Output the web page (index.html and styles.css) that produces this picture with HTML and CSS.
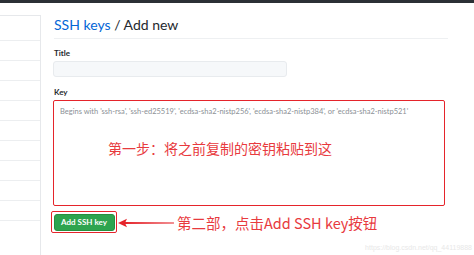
FILE: index.html
```html
<!DOCTYPE html>
<html lang="zh-CN">
<head>
<meta charset="utf-8">
<title>SSH keys / Add new</title>
<link rel="stylesheet" href="styles.css">
</head>
<body>
<div class="topbar"></div>
<div class="main">
  <nav class="sidebar">
    <div class="side-row side-first"></div>
    <div class="side-row"></div>
    <div class="side-row"></div>
    <div class="side-row"></div>
    <div class="side-row"></div>
    <div class="side-row"></div>
    <div class="side-row"></div>
    <div class="side-row"></div>
    <div class="side-row"></div>
    <div class="side-row"></div>
  </nav>
  <div class="content">
    <h1 class="heading"><a class="crumb" href="#">SSH keys</a> / Add new</h1>
    <form class="form">
      <label class="label" for="title">Title</label>
      <input class="input" id="title" type="text">
      <label class="label label-key" for="key">Key</label>
      <div class="key-wrap">
        <textarea class="textarea" id="key" placeholder="Begins with 'ssh-rsa', 'ssh-ed25519', 'ecdsa-sha2-nistp256', 'ecdsa-sha2-nistp384', or 'ecdsa-sha2-nistp521'"></textarea>
        <span class="note note-step1">第一步：将之前复制的密钥粘贴到这</span>
      </div>
      <div class="actions">
        <div class="btn-mark"><button class="btn" type="button">Add SSH key</button></div>
        <svg class="arrow" width="56" height="10" viewBox="0 0 56 10">
          <polygon points="0,5 9,0.8 7,5 9,9.2" fill="#e5242b"/>
          <polygon points="6,3.9 56,4.6 56,5.4 6,6.1" fill="#e5242b"/>
        </svg>
        <span class="note note-step2">第二部，点击Add SSH key按钮</span>
      </div>
    </form>
  </div>
</div>
<div class="watermark">https://blog.csdn.net/qq_44119888</div>
</body>
</html>
```
FILE: styles.css
```css
* { box-sizing: border-box; }
html, body { margin: 0; padding: 0; }
body {
  width: 474px;
  height: 255px;
  overflow: hidden;
  background: #fff;
  font-family: Lato, "Liberation Sans", "Noto Sans CJK SC", sans-serif;
  color: #24292e;
  position: relative;
}
.topbar { height: 3px; background: #2b3035; }
.main { display: flex; height: 252px; }
.sidebar {
  width: 41px;
  flex: none;
  margin-top: 12px;
  border-top: 1px solid #e6e8eb;
  border-right: 1px solid #e6e8eb;
  display: flex;
  flex-direction: column;
}
.side-row { height: 20px; border-bottom: 1px solid #eceef0; }
.side-first { height: 25px; }
.content { width: 394px; margin-left: 13px; }
.heading {
  margin: 13px 0 0;
  font-size: 14px;
  line-height: 18px;
  font-weight: 400;
  padding-bottom: 4px;
  border-bottom: 1px solid #eef0f2;
  color: #24292e;
}
.crumb { color: #0366d6; text-decoration: none; }
.form { display: flex; flex-direction: column; align-items: flex-start; }
.label {
  display: block;
  margin-top: 9px;
  font-size: 8px;
  line-height: 10px;
  font-weight: 700;
  color: #24292e;
}
.input {
  margin-top: 3px;
  margin-left: -1px;
  width: 234px;
  height: 16px;
  background: #f6f8fa;
  border: 1px solid #e8ebee;
  border-radius: 3px;
  outline: none;
}
.label-key { margin-top: 10px; }
.key-wrap { position: relative; margin-top: 3px; margin-left: -1px; }
.textarea {
  display: block;
  width: 392px;
  height: 106px;
  border: 1.5px solid #e5242b;
  border-radius: 2px;
  padding: 6px 6px;
  font-family: Lato, "Liberation Sans", sans-serif;
  font-size: 7.5px;
  line-height: 9px;
  resize: none;
  outline: none;
}
.textarea::placeholder { color: #8b9096; }
.note {
  font-family: "Noto Sans CJK SC", sans-serif;
  font-size: 14px;
  line-height: 20px;
  color: #e83a3e;
  white-space: nowrap;
}
.note-step1 { position: absolute; left: 55px; top: 38px; }
.actions { display: flex; align-items: center; margin-top: 5px; margin-left: -3px; }
.btn-mark {
  border: 1.5px solid #e5242b;
  border-radius: 2px;
  padding: 1.5px;
}
.btn {
  display: block;
  width: 61px;
  height: 17px;
  padding: 0;
  background: #2ea44f;
  border: 1px solid #27903f;
  border-radius: 3px;
  color: #fff;
  font-family: Lato, "Liberation Sans", sans-serif;
  font-size: 8px;
  font-weight: 700;
}
.arrow { display: block; margin-left: 1px; margin-top: 1px; }
.note-step2 { margin-left: 3px; margin-top: 1px; font-size: 14.5px; }
.watermark {
  position: absolute;
  right: 2px;
  bottom: 4px;
  font-family: "Liberation Sans", sans-serif;
  font-size: 7px;
  color: #e8e8e8;
}
```
